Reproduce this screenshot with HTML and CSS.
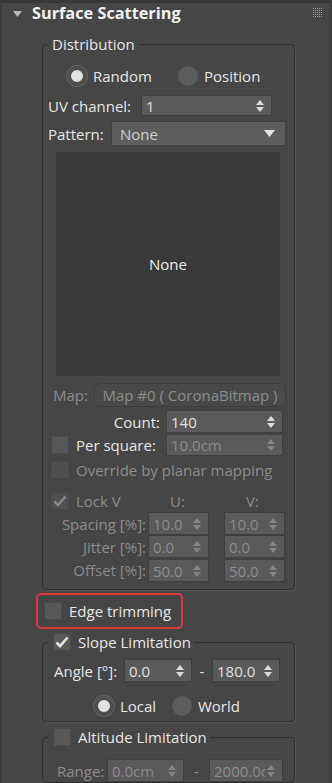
FILE: index.html
```html
<!DOCTYPE html>
<html>
<head>
<meta charset="utf-8">
<link rel="stylesheet" href="styles.css">
</head>
<body>
<div class="panel">
  <div class="topbar"></div>
  <div class="header">
    <svg class="tri" width="9" height="6" viewBox="0 0 9 6"><path d="M0 0H9L4.5 6Z" fill="#b9b9b9"/></svg>
    <span class="title">Surface Scattering</span>
    <svg class="grip" width="9" height="9" viewBox="0 0 9 9">
      <defs><pattern id="dots" width="2" height="2" patternUnits="userSpaceOnUse"><rect width="1" height="1" fill="#9a9a9a"/></pattern></defs>
      <rect width="9" height="9" fill="url(#dots)"/>
    </svg>
  </div>

  <fieldset class="group dist">
    <legend>Distribution</legend>
    <div class="row radios">
      <div class="ritem r-random"><span class="radio on"></span><span class="rlabel">Random</span></div>
      <div class="ritem"><span class="radio"></span><span class="rlabel">Position</span></div>
    </div>
    <div class="row uv">
      <span class="label l-uv">UV channel:</span>
      <div class="spin w-uv"><span class="val">1</span><i class="arrows"></i></div>
    </div>
    <div class="row pattern">
      <span class="label l-pat">Pattern:</span>
      <div class="drop"><span>None</span><svg width="11" height="7" viewBox="0 0 11 7"><path d="M0 0H11L5.5 7Z" fill="#e0e0e0"/></svg></div>
    </div>
    <div class="preview">None</div>
    <div class="row map">
      <span class="label dim l-map">Map:</span>
      <div class="mapbtn">Map #0 ( CoronaBitmap )</div>
    </div>
    <div class="row count">
      <span class="label l-count">Count:</span>
      <div class="spin w-count"><span class="val">140</span><i class="arrows"></i></div>
    </div>
    <div class="row persq">
      <div class="cwrap"><span class="check"></span><span class="label cl">Per square:</span></div>
      <div class="spin w-count off"><span class="val">10.0cm</span><i class="arrows"></i></div>
    </div>
    <div class="row override">
      <div class="cwrap"><span class="check off"></span><span class="label cl dim">Override by planar mapping</span></div>
    </div>
    <div class="uvgrid">
      <div class="cwrap lockv"><span class="check off"><svg width="14" height="12" viewBox="0 0 14 12"><path d="M1.5 6.5L5 10L12.5 1.5" fill="none" stroke="#8a8a8a" stroke-width="2.6"/></svg></span><span class="label cl dim">Lock V</span></div>
      <span class="label dim head u">U:</span>
      <span class="label dim head v">V:</span>

      <span class="label dim gl">Spacing [%]:</span>
      <div class="spin off u"><span class="val">10.0</span><i class="arrows"></i></div>
      <div class="spin off v"><span class="val">10.0</span><i class="arrows"></i></div>
      <span class="label dim gl">Jitter [%]:</span>
      <div class="spin off u"><span class="val">0.0</span><i class="arrows"></i></div>
      <div class="spin off v"><span class="val">0.0</span><i class="arrows"></i></div>
      <span class="label dim gl">Offset [%]:</span>
      <div class="spin off u"><span class="val">50.0</span><i class="arrows"></i></div>
      <div class="spin off v"><span class="val">50.0</span><i class="arrows"></i></div>
    </div>
  </fieldset>

  <div class="edge">
    <div class="hl">
      <span class="check"></span><span class="label el">Edge trimming</span>
    </div>
  </div>

  <fieldset class="group slope">
    <legend><span class="check"><svg width="14" height="12" viewBox="0 0 14 12"><path d="M1.5 6.5L5 10L12.5 1.5" fill="none" stroke="#e6e6e6" stroke-width="2.6"/></svg></span><span class="ltext">Slope Limitation</span></legend>
    <div class="row angle">
      <span class="label l-angle">Angle [°]:</span>
      <div class="spin a1"><span class="val">0.0</span><i class="arrows"></i></div>
      <span class="dash">-</span>
      <div class="spin a2"><span class="val">180.0</span><i class="arrows"></i></div>
    </div>
    <div class="row radios2">
      <div class="ritem r-local"><span class="radio on"></span><span class="rlabel">Local</span></div>
      <div class="ritem"><span class="radio"></span><span class="rlabel">World</span></div>
    </div>
  </fieldset>

  <fieldset class="group alt">
    <legend><span class="check"></span><span class="ltext">Altitude Limitation</span></legend>
    <div class="row range">
      <span class="label dim l-range">Range:</span>
      <div class="spin off r1"><span class="val">0.0cm</span><i class="arrows"></i></div>
      <span class="dash dimd">-</span>
      <div class="spin off r2"><span class="val">2000.0cm</span><i class="arrows"></i></div>
    </div>
  </fieldset>
</div>
</body>
</html>
```

FILE: styles.css
```css
html, body {
  margin: 0;
  padding: 0;
  background: #444444;
}
body {
  font-family: "Open Sans", "Noto Sans", sans-serif;
  font-size: 15px;
  color: #e6e6e6;
}
.panel {
  width: 332px;
  height: 783px;
  box-sizing: border-box;
  border-left: 2px solid #3b3b3b;
  border-right: 2px solid #3b3b3b;
  background: #464646;
  overflow: hidden;
}
.topbar {
  height: 3px;
  background: #383838;
  margin-left: -2px;
  margin-right: -2px;
}
.header {
  height: 20px;
  display: flex;
  align-items: center;
}
.tri {
  margin-left: 11px;
  margin-top: 1px;
  flex: none;
}
.title {
  margin-left: 10px;
  font-weight: 700;
  font-size: 16.3px;
  color: #f2f2f2;
  line-height: 20px;
  white-space: nowrap;
}
.grip {
  margin-left: auto;
  margin-right: 8px;
  margin-top: -1px;
  flex: none;
}

/* group boxes */
.group {
  margin: 11px 0 0 40px;
  width: 253px;
  box-sizing: border-box;
  border: 1px solid #2f2f2f;
  border-radius: 4px;
  box-shadow: 1px 1px 0 #535353;
  padding: 0 7px 0 5px;
  min-width: 0;
}
.group legend {
  padding: 0 4px;
  margin-left: 0;
  line-height: 20px;
  height: 20px;
  display: flex;
  align-items: center;
  white-space: nowrap;
}
.dist { padding-bottom: 7px; }

.row {
  display: flex;
  align-items: center;
}
.label {
  white-space: nowrap;
  line-height: 20px;
  flex: none;
}
.dim { color: #8c8c8c; }

/* radios */
.ritem {
  display: flex;
  align-items: center;
  flex: none;
}
.radio {
  width: 20px;
  height: 20px;
  border-radius: 50%;
  background: #5c5c5c;
  box-sizing: border-box;
  flex: none;
}
.radio.on {
  background: #e2e2e2;
  border: 4px solid #4e4e4e;
  box-shadow: 0 0 0 1px #616161;
}
.rlabel { margin-left: 6px; line-height: 20px; white-space: nowrap; }
.radios { height: 20px; margin-top: 12px; padding-left: 19px; }
.r-random { width: 111px; }

/* spinners */
.spin {
  position: relative;
  height: 100%;
  box-sizing: border-box;
  background: #5a5a5a;
  border: 1px solid #3f3f3f;
  display: flex;
  align-items: center;
  padding-left: 4px;
  white-space: nowrap;
  color: #e0e0e0;
  flex: none;
}
.val {
  line-height: 20px;
  flex: 1;
  min-width: 0;
  overflow: hidden;
  margin-right: 17px;
}
.arrows {
  position: absolute;
  right: 6px;
  top: 50%;
  margin-top: -6px;
  width: 9px;
  height: 12px;
}
.arrows::before {
  content: "";
  position: absolute;
  left: 0; top: 0;
  border-left: 4.5px solid transparent;
  border-right: 4.5px solid transparent;
  border-bottom: 5px solid #dcdcdc;
}
.arrows::after {
  content: "";
  position: absolute;
  left: 0; bottom: 0;
  border-left: 4.5px solid transparent;
  border-right: 4.5px solid transparent;
  border-top: 5px solid #dcdcdc;
}
.spin.off { color: #8c8c8c; }
.spin.off .arrows::before { border-bottom-color: #858585; }
.spin.off .arrows::after { border-top-color: #858585; }

.uv { height: 21px; margin-top: 9px; }
.l-uv { width: 93px; }
.w-uv { width: 131px; }

.pattern { height: 25px; margin-top: 5px; }
.l-pat { width: 63px; }
.drop {
  width: 175px;
  height: 100%;
  box-sizing: border-box;
  background: #5d5d5d;
  border: 1px solid #3f3f3f;
  display: flex;
  align-items: center;
  justify-content: space-between;
  padding: 0 10px 0 8px;
  color: #cfcfcf;
}

.preview {
  margin: 6px 0 0 8px;
  width: 224px;
  height: 224px;
  background: #3a3a3a;
  display: flex;
  align-items: center;
  justify-content: center;
  color: #ececec;
}

.map { height: 24px; margin-top: 7px; }
.l-map { width: 41px; padding-left: 5px; }
.mapbtn {
  width: 192px;
  height: 100%;
  box-sizing: border-box;
  border: 1px solid #3d3d3d;
  border-radius: 6px;
  background: #4a4a4a;
  color: #8c8c8c;
  display: flex;
  align-items: center;
  justify-content: center;
  white-space: nowrap;
}

.count { height: 23px; margin-top: 3px; }
.l-count { width: 112px; text-align: right; margin-right: 6px; }
.w-count { width: 117px; }

.check {
  width: 18px;
  height: 18px;
  box-sizing: border-box;
  background: #585858;
  border: 1px solid #4a4a4a;
  flex: none;
  display: flex;
  align-items: center;
  justify-content: center;
}
.check.off { background: #4f4f4f; }
.cwrap {
  display: flex;
  align-items: center;
  padding-left: 3px;
}
.cl { margin-left: 7px; }
.persq { height: 22px; margin-top: 1px; }
.persq .cwrap { width: 115px; }
.override { height: 21px; margin-top: 3px; }

.uvgrid {
  margin-top: 9px;
  display: grid;
  grid-template-columns: 100px 61px 15px 61px;
  grid-template-rows: 23px 23px 23px 24px;
}
.uvgrid .lockv { grid-column: 1 / 2; white-space: nowrap; overflow: visible; }
.uvgrid .u { grid-column: 2; }
.uvgrid .v { grid-column: 4; }
.uvgrid .gl { grid-column: 1; text-align: right; padding-right: 2px; align-self: center; }
.uvgrid .spin { height: 23px; align-self: end; }
.head { text-align: center; align-self: center; }
.head.u { padding-right: 2px; }
.head.v { padding-right: 4px; }

/* edge trimming highlight */
.edge {
  margin-top: 3px;
  padding-left: 34px;
}
.hl {
  width: 147px;
  height: 36px;
  box-sizing: border-box;
  border: 2px solid #e2363c;
  border-radius: 5px;
  display: flex;
  align-items: center;
  padding-left: 6px;
}
.el { margin-left: 7px; }

.slope { margin-top: 3px; padding-bottom: 5px; }
.alt { margin-top: 5px; }
.ltext { margin-left: 7px; }
.slope legend, .alt legend { padding: 0 3px 0 5px; }

.angle { height: 23px; margin-top: 7px; }
.l-angle { width: 76px; padding-left: 6px; box-sizing: border-box; }
.a1 { width: 68px; }
.dash { width: 20px; text-align: center; flex: none; }
.a2 { width: 68px; }
.radios2 { height: 20px; margin-top: 14px; padding-left: 46px; }
.r-local { width: 78px; }

.range { height: 23px; margin-top: 12px; }
.l-range { width: 59px; padding-left: 9px; box-sizing: border-box; }
.r1 { width: 77px; }
.dimd { color: #8c8c8c; width: 25px; }
.r2 { width: 74px; }
```
